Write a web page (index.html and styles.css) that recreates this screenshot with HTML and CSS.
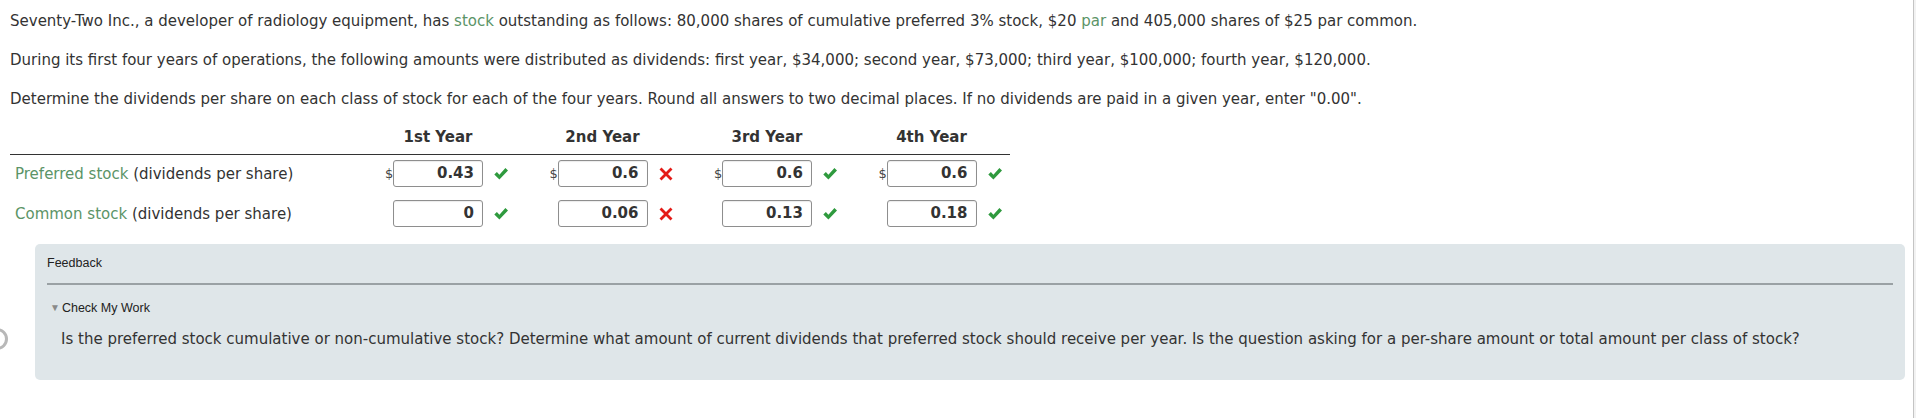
FILE: index.html
```html
<!DOCTYPE html>
<html>
<head>
<meta charset="utf-8">
<link rel="stylesheet" href="styles.css">
</head>
<body>
<div class="frame">
  <div class="content">
    <p class="q">Seventy-Two Inc., a developer of radiology equipment, has <span class="term">stock</span> outstanding as follows: 80,000 shares of cumulative preferred 3% stock, $20 <span class="term">par</span> and 405,000 shares of $25 par common.</p>
    <p class="q">During its first four years of operations, the following amounts were distributed as dividends: first year, $34,000; second year, $73,000; third year, $100,000; fourth year, $120,000.</p>
    <p class="q">Determine the dividends per share on each class of stock for each of the four years. Round all answers to two decimal places. If no dividends are paid in a given year, enter "0.00".</p>

    <div class="grid">
      <div class="hcell"></div>
      <div class="hcell year"><span>1st Year</span></div>
      <div class="hcell year"><span>2nd Year</span></div>
      <div class="hcell year"><span>3rd Year</span></div>
      <div class="hcell year"><span>4th Year</span></div>

      <div class="label first"><span><span class="term">Preferred stock</span> (dividends per share)</span></div>
      <div class="cell first"><span class="dollar">$</span><span class="box">0.43</span><span class="mark ok"><svg viewBox="0 0 14 14"><path d="M0.3 7.6 L2.9 5.1 L5.4 7.7 L11.4 0.9 L14 3.4 L5.4 12.6 Z" /></svg></span></div>
      <div class="cell first"><span class="dollar">$</span><span class="box">0.6</span><span class="mark bad"><svg viewBox="0 0 14 14"><path d="M2.5 2.5 L11.5 11.5 M11.5 2.5 L2.5 11.5" /></svg></span></div>
      <div class="cell first"><span class="dollar">$</span><span class="box">0.6</span><span class="mark ok"><svg viewBox="0 0 14 14"><path d="M0.3 7.6 L2.9 5.1 L5.4 7.7 L11.4 0.9 L14 3.4 L5.4 12.6 Z" /></svg></span></div>
      <div class="cell first"><span class="dollar">$</span><span class="box">0.6</span><span class="mark ok"><svg viewBox="0 0 14 14"><path d="M0.3 7.6 L2.9 5.1 L5.4 7.7 L11.4 0.9 L14 3.4 L5.4 12.6 Z" /></svg></span></div>

      <div class="label"><span><span class="term">Common stock</span> (dividends per share)</span></div>
      <div class="cell"><span class="dollar"></span><span class="box">0</span><span class="mark ok"><svg viewBox="0 0 14 14"><path d="M0.3 7.6 L2.9 5.1 L5.4 7.7 L11.4 0.9 L14 3.4 L5.4 12.6 Z" /></svg></span></div>
      <div class="cell"><span class="dollar"></span><span class="box">0.06</span><span class="mark bad"><svg viewBox="0 0 14 14"><path d="M2.5 2.5 L11.5 11.5 M11.5 2.5 L2.5 11.5" /></svg></span></div>
      <div class="cell"><span class="dollar"></span><span class="box">0.13</span><span class="mark ok"><svg viewBox="0 0 14 14"><path d="M0.3 7.6 L2.9 5.1 L5.4 7.7 L11.4 0.9 L14 3.4 L5.4 12.6 Z" /></svg></span></div>
      <div class="cell"><span class="dollar"></span><span class="box">0.18</span><span class="mark ok"><svg viewBox="0 0 14 14"><path d="M0.3 7.6 L2.9 5.1 L5.4 7.7 L11.4 0.9 L14 3.4 L5.4 12.6 Z" /></svg></span></div>
    </div>

    <div class="feedback">
      <div class="fb-title">Feedback</div>
      <div class="fb-check"><span class="tri">&#9660;</span>Check My Work</div>
      <div class="fb-text">Is the preferred stock cumulative or non-cumulative stock? Determine what amount of current dividends that preferred stock should receive per year. Is the question asking for a per-share amount or total amount per class of stock?</div>
    </div>
  </div>
  <div class="strip"></div>
  <div class="edge-circle"></div>
</div>
</body>
</html>
```

FILE: styles.css
```css
html, body {
  margin: 0;
  padding: 0;
  background: #ffffff;
}

body {
  font-family: "DejaVu Sans", Verdana, sans-serif;
  font-size: 15px;
  color: #333333;
}

.frame {
  display: flex;
  min-height: 418px;
  position: relative;
  overflow: hidden;
}

.content {
  flex: 1;
  padding: 12px 8px 0 10px;
}

.strip {
  width: 2px;
  border-left: 1px solid #c4c4c4;
  background: #f2f2f2;
}

.q {
  margin: 0 0 21px 0;
  line-height: 18px;
  white-space: nowrap;
}

.term {
  color: #5b9467;
}

.grid {
  display: grid;
  width: 1000px;
  grid-template-columns: 370px 164.5px 164.5px 164.5px 136.5px;
}

.hcell {
  border-bottom: 1px solid #333333;
  padding: 0 0 9px 0;
  line-height: 16px;
  font-weight: bold;
}

.hcell.year span {
  display: block;
  width: 90px;
  margin-left: 13px;
  text-align: center;
}

.label {
  display: flex;
  align-items: center;
  padding-left: 5px;
  height: 27px;
  margin-top: 13px;
}

.label.first {
  margin-top: 5px;
}

.cell {
  display: flex;
  align-items: center;
  height: 27px;
  margin-top: 13px;
}

.cell.first {
  margin-top: 5px;
}

.dollar {
  width: 8px;
  margin-left: 5px;
  font-size: 13px;
  color: #444;
  text-align: left;
}

.box {
  box-sizing: border-box;
  width: 90px;
  height: 27px;
  border: 1px solid #8e8e8e;
  border-radius: 3px;
  background: #fff;
  box-shadow: inset 0 1px 1px rgba(0,0,0,0.08);
  text-align: right;
  padding-right: 8px;
  line-height: 25px;
  font-weight: bold;
  font-size: 15px;
  color: #333;
}

.mark {
  display: inline-flex;
  margin-left: 11px;
  width: 14px;
  height: 14px;
}

.mark svg {
  width: 14px;
  height: 14px;
}

.mark.ok svg path {
  fill: #2f9a3e;
  stroke: none;
}

.mark.bad svg path {
  fill: none;
  stroke: #e41b17;
  stroke-width: 2.8;
  stroke-linecap: square;
}

.feedback {
  margin: 17px 0 0 25px;
  height: 136px;
  box-sizing: border-box;
  background: #dfe6e9;
  border-radius: 5px;
  padding: 11px 12px 0 12px;
}

.fb-title {
  font-family: "Liberation Sans", Arial, sans-serif;
  font-size: 12.5px;
  line-height: 16px;
  color: #222;
  padding-bottom: 12px;
  border-bottom: 2px solid #9aa1a4;
}

.fb-check {
  font-family: "Liberation Sans", Arial, sans-serif;
  font-size: 12.5px;
  line-height: 16px;
  color: #222;
  margin-top: 15px;
  padding-left: 3px;
}

.tri {
  font-size: 10px;
  color: #8a8a8a;
  margin-right: 2px;
  vertical-align: 1px;
}

.fb-text {
  margin-top: 14px;
  padding-left: 14px;
  line-height: 18px;
  color: #333;
}

.edge-circle {
  position: absolute;
  left: -14px;
  top: 328px;
  width: 16px;
  height: 16px;
  border: 3px solid #b8b8b8;
  border-radius: 50%;
}
```
